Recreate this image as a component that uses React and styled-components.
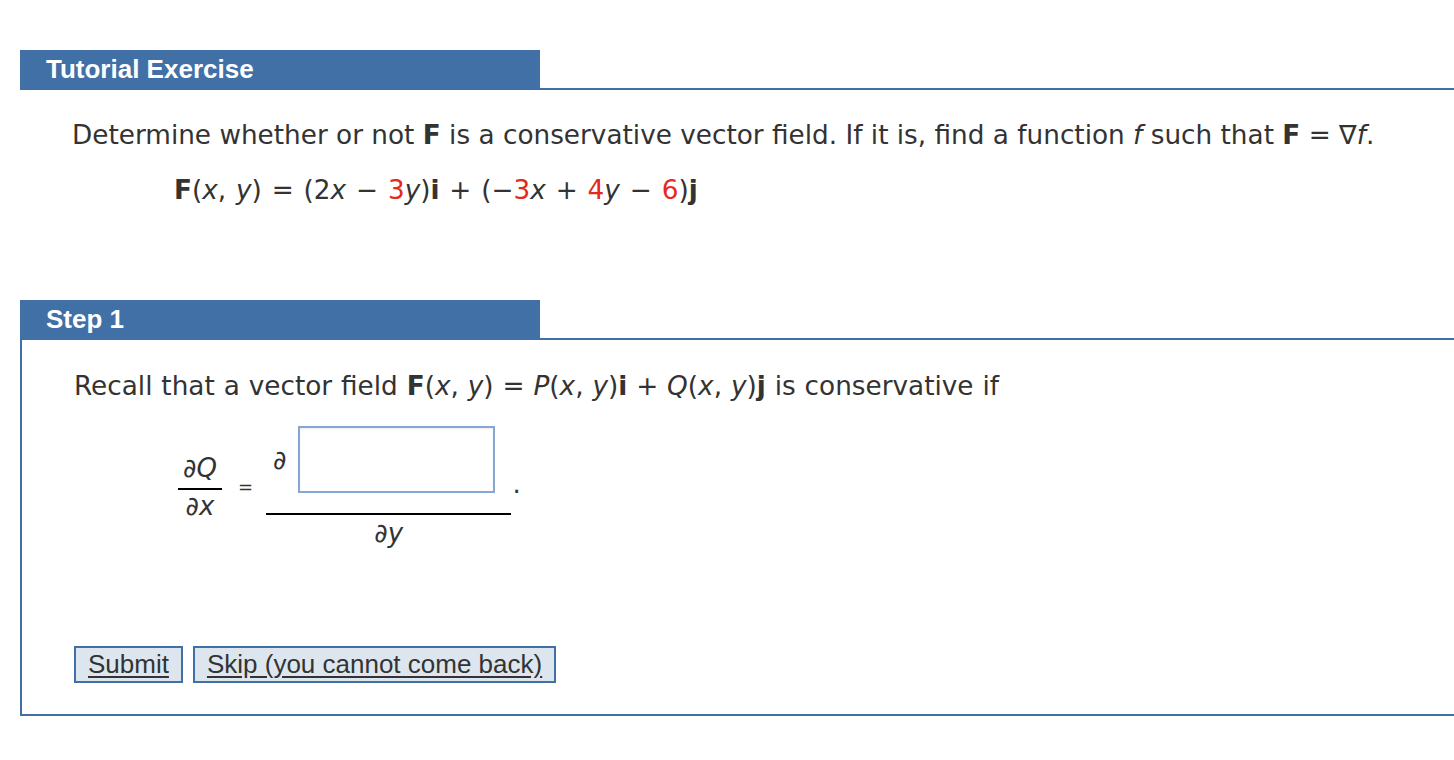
import React from 'react';
import styled, { createGlobalStyle } from 'styled-components';

const blue = '#4170a7';
const ink = '#333333';

const Global = createGlobalStyle`
  html, body {
    margin: 0;
    padding: 0;
    background: #ffffff;
    overflow: hidden;
  }
  body {
    font-family: "DejaVu Sans", Verdana, sans-serif;
    color: ${ink};
  }
`;

const Page = styled.div`
  padding: 50px 0 0 20px;
`;

const HeaderRow = styled.div`
  display: flex;
  height: 40px;
  border-bottom: 2px solid ${blue};
  box-sizing: border-box;
`;

const HeaderTab = styled.div`
  width: 520px;
  height: 40px;
  flex-shrink: 0;
  background: ${blue};
  color: #ffffff;
  font-family: "Liberation Sans", Arial, sans-serif;
  font-weight: bold;
  font-size: 26px;
  line-height: 38px;
  padding-left: 26px;
  box-sizing: border-box;
`;

const Content = styled.div`
  padding: 30px 0 0 52px;
`;

const Para = styled.div`
  font-size: 26.3px;
  line-height: 30px;
  white-space: nowrap;
  word-spacing: ${({ $ws }) => $ws || 0}px;
`;

const Equation = styled(Para)`
  margin-top: 25px;
  padding-left: 102px;
`;

const Red = styled.span`
  color: #e4291d;
`;

const StepSection = styled.div`
  margin-top: 95px;
`;

const StepBox = styled.div`
  border-left: 2px solid ${blue};
  border-bottom: 2px solid ${blue};
  padding: 31px 0 31px 52px;
`;

const FractionRow = styled.div`
  display: flex;
  align-items: center;
  margin-top: 25px;
  padding-left: 104px;
`;

const Fraction = styled.div`
  display: inline-flex;
  flex-direction: column;
  align-items: center;
  font-size: 26px;
  line-height: 28px;
  font-style: italic;
`;

const Numer = styled.div`
  display: flex;
  align-items: center;
  padding: 0 5px 6px;
  white-space: nowrap;
`;

const WideNumer = styled(Numer)`
  align-self: stretch;
  gap: 12px;
  padding: 0 16px 20px 7px;
`;

const Bar = styled.div`
  align-self: stretch;
  height: 2px;
  background: #000000;
`;

const Denom = styled.div`
  padding-top: ${({ $gap }) => $gap || 2}px;
`;

const Equals = styled.span`
  font-size: 18px;
  margin: 0 13px 0 16px;
`;

const Dot = styled.span`
  font-size: 26px;
  margin-left: 1px;
  padding-bottom: 6px;
`;

const AnswerInput = styled.input`
  width: 197px;
  height: 67px;
  box-sizing: border-box;
  border: 2px solid #86a6d3;
  box-shadow: inset 0 1px 2px rgba(0, 0, 0, 0.08);
  background: #ffffff;
  outline: none;
  font-size: 24px;
`;

const Buttons = styled.div`
  display: flex;
  gap: 10px;
  margin-top: 99px;
`;

const Button = styled.button`
  font-family: "Liberation Sans", Arial, sans-serif;
  font-size: 26px;
  line-height: 29px;
  color: ${ink};
  text-decoration: underline;
  text-underline-offset: 3px;
  background: #dde6ef;
  border: 2px solid ${blue};
  border-radius: 0;
  padding: 2px 12px;
  cursor: pointer;
`;

export default function App() {
  return (
    <>
      <Global />
      <Page>
        <section>
          <HeaderRow>
            <HeaderTab>Tutorial Exercise</HeaderTab>
          </HeaderRow>
          <Content>
            <Para>
              Determine whether or not <b>F</b> is a conservative vector field. If it is, find a
              function <i>f</i> such that <b>F</b> = ∇<i>f</i>.
            </Para>
            <Equation $ws={1.5}>
              <b>F</b>(<i>x</i>, <i>y</i>) = (2<i>x</i> − <Red>3</Red><i>y</i>)<b>i</b> + (−<Red>3</Red>
              <i>x</i> + <Red>4</Red><i>y</i> − <Red>6</Red>)<b>j</b>
            </Equation>
          </Content>
        </section>

        <StepSection>
          <HeaderRow>
            <HeaderTab>Step 1</HeaderTab>
          </HeaderRow>
          <StepBox>
            <Para $ws={0.55}>
              Recall that a vector field <b>F</b>(<i>x</i>, <i>y</i>) = <i>P</i>(<i>x</i>, <i>y</i>)
              <b>i</b> + <i>Q</i>(<i>x</i>, <i>y</i>)<b>j</b> is conservative if
            </Para>
            <FractionRow>
              <Fraction>
                <Numer>∂<i>Q</i></Numer>
                <Bar />
                <Denom>∂<i>x</i></Denom>
              </Fraction>
              <Equals>=</Equals>
              <Fraction>
                <WideNumer>
                  <span>∂</span>
                  <AnswerInput type="text" />
                </WideNumer>
                <Bar />
                <Denom $gap={4}>∂<i>y</i></Denom>
              </Fraction>
              <Dot>.</Dot>
            </FractionRow>
            <Buttons>
              <Button>Submit</Button>
              <Button>Skip (you cannot come back)</Button>
            </Buttons>
          </StepBox>
        </StepSection>
      </Page>
    </>
  );
}
